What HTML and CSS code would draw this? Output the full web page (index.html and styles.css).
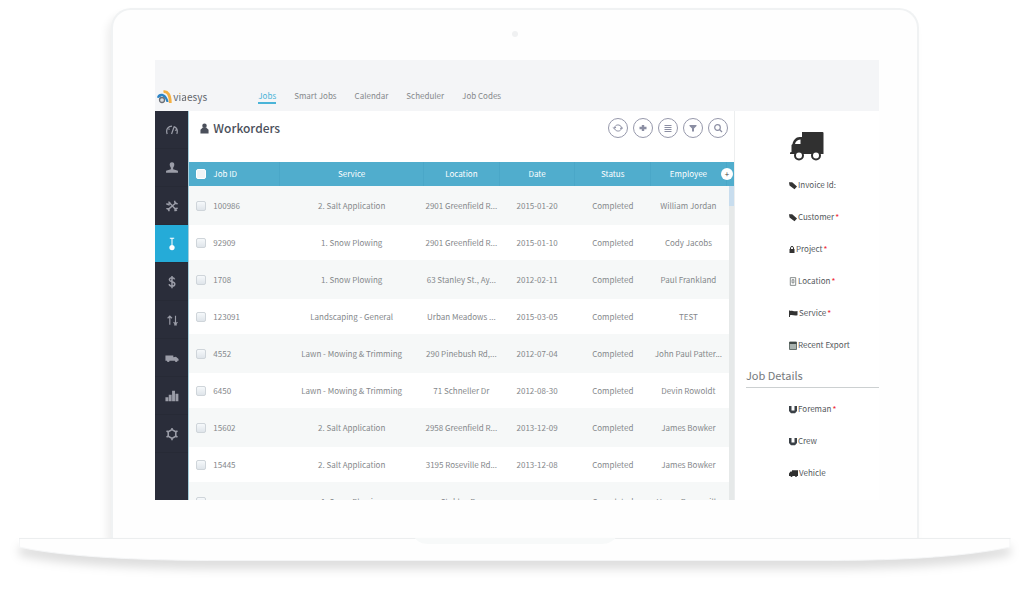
FILE: index.html
```html
<!DOCTYPE html>
<html lang="en">
<head>
<meta charset="utf-8">
<title>viaesys – Workorders</title>
<meta name="viewport" content="width=device-width, initial-scale=1">
<link rel="stylesheet" href="styles.css">
</head>
<body>
<div class="laptop">
  <div class="lid">
    <span class="camera"></span>
    <div class="screen">
      <header class="topbar">
        <a class="logo" href="#" aria-label="viaesys home">
          <svg class="logo-mark" viewBox="0 0 15 14" aria-hidden="true">
            <path d="M6.500 1.800C10.500 1 13.300 5 13.300 13" fill="none" stroke="#f5b042" stroke-width="2.800"/>
            <path d="M0 7.500C.5 2.500 9.500 1.500 11.500 12H9.500L8 8.500 5 6 1.500 8z" fill="#2b84c6"/>
            <circle cx="5" cy="10" r="2.500" fill="#d9dde0" stroke="#6b6f76" stroke-width="1.300"/>
          </svg>
          <span class="logo-text">v<i class="accent">ia</i>esys</span>
        </a>
        <nav class="tabs" aria-label="Main">
          <a class="tab tab-active" href="#">Jobs</a>
          <a class="tab" href="#">Smart Jobs</a>
          <a class="tab" href="#">Calendar</a>
          <a class="tab" href="#">Scheduler</a>
          <a class="tab" href="#">Job Codes</a>
        </nav>
      </header>
      <div class="workspace">
        <nav class="sidebar" aria-label="Sections">
          <a class="side-link" href="#" aria-label="Dashboard"><svg viewBox="0 0 16 16" fill="none" stroke="currentColor" stroke-width="1.400"><path d="M2.500 12.500C.5 7 4 3.500 8 3.500M10.500 4.200c3 1.300 4.200 4.500 3 8.300M7.500 12.500 10.500 4M4 6.500l1.200 1M11.500 8.500l2-1"/></svg></a>
          <a class="side-link" href="#" aria-label="Customers"><svg viewBox="0 0 16 16" fill="currentColor"><path d="M8 1.500c2 0 2.800 1.300 2.600 3.200C10.400 6.500 9.500 7 9.300 8v1.500l5.500 1.500v2.500H1.200V11l5.500-1.500V8C6.500 7 5.600 6.500 5.400 4.700 5.200 2.800 6 1.500 8 1.500z"/></svg></a>
          <a class="side-link" href="#" aria-label="Tools"><svg viewBox="0 0 16 16" fill="none" stroke="currentColor" stroke-width="1.700"><path d="M4 3l9.500 10.500M13 4 3 12.500M1.500 5.500l3 1 1-3M11 2l.5 3 3 .5M1.500 11h3v3M14.500 10.500l-3 .5v3"/></svg></a>
          <a class="side-link side-active" href="#" aria-label="Jobs"><svg viewBox="0 0 16 16" fill="none" stroke="currentColor" stroke-width="1.200"><path d="M5.500 1.500h5M8 1.500V10"/><circle cx="8" cy="12" r="3" fill="currentColor" stroke="none"/></svg></a>
          <a class="side-link" href="#" aria-label="Billing"><svg viewBox="0 0 16 16" fill="none" stroke="currentColor" stroke-width="1.700"><path d="M11 5C10.500 3.500 9.500 3.200 8 3.200 6.200 3.200 5 4 5 5.500 5 8.500 11.200 7 11.200 10.300c0 1.600-1.400 2.500-3.200 2.500-1.700 0-2.900-.6-3.300-2.300M8 1v14"/></svg></a>
          <a class="side-link" href="#" aria-label="Import and export"><svg viewBox="0 0 16 16" fill="none" stroke="currentColor" stroke-width="1.300"><path d="M5.500 13.500v-10M3 6l2.500-2.500L8 6M12 3v10M9.800 10.500 12 13l2.200-2.500M10.500 13.500h3"/></svg></a>
          <a class="side-link" href="#" aria-label="Fleet"><svg viewBox="0 0 16 16" fill="currentColor"><path d="M.5 5h9v2l3-.5 3 2.500v2h-1.200a1.500 1.500 0 0 1-3 0H5.200a1.500 1.500 0 0 1-3 0H.5z"/></svg></a>
          <a class="side-link" href="#" aria-label="Reports"><svg viewBox="0 0 16 16" fill="currentColor"><path d="M.5 9.500h3.300V14H.5zM4.300 6.500h3.300V14H4.300zM8.100 2h3.300v12H8.100zM12 5.500h3.300V14H12z"/></svg></a>
          <a class="side-link" href="#" aria-label="Settings"><svg viewBox="0 0 16 16" fill="none" stroke="currentColor" stroke-width="1.800"><path d="M8 3 12.300 5.500v5L8 13l-4.300-2.500v-5z"/><path d="M8 1v2M14.300 4.500l-2 1M14.300 11.500l-2-1M8 13v2M1.700 11.500l2-1M1.700 4.500l2 1"/></svg></a>
        </nav>
        <main class="main">
          <div class="titlebar">
            <h1 class="title">
              <svg class="title-icon" viewBox="0 0 10 12" fill="#4b505b" aria-hidden="true"><circle cx="5" cy="3" r="2.500"/><path d="M3.200 5h3.600L9.500 7.500V11.500H.5V7.500z"/></svg>
              Workorders
            </h1>
            <div class="actions">
              <button class="round" type="button" aria-label="Refresh"><svg viewBox="0 0 12 12" fill="none" stroke="currentColor"><path d="M2.500 6C3 2 8.500 2 9.500 5.500M9.500 6C9 10 4 9.800 2.700 7M.8 5.500l1.700 1.200L4 5M8 6.700l1.600-1.400L11 6.500"/></svg></button>
              <button class="round" type="button" aria-label="Add"><svg viewBox="0 0 12 12" fill="none" stroke="currentColor" stroke-width="2.400"><path d="M6 3v6M2.500 6h7"/></svg></button>
              <button class="round" type="button" aria-label="List"><svg viewBox="0 0 12 12" fill="none" stroke="currentColor"><path d="M2.500 3.500h7M2.500 5.500h7M2.500 7.500h7M2.500 9.500h7"/></svg></button>
              <button class="round" type="button" aria-label="Filter"><svg viewBox="0 0 12 12" fill="currentColor"><path d="M2.500 3h7v1L7 6.500V9.500H5V6.500L2.500 4z"/></svg></button>
              <button class="round" type="button" aria-label="Search"><svg viewBox="0 0 12 12" fill="none" stroke="currentColor" stroke-width="1.200"><circle cx="5.500" cy="5.500" r="2.800"/><path d="M7.500 7.500 10 10"/></svg></button>
            </div>
          </div>
          <div class="grid">
            <table class="jobs">
              <colgroup><col class="c-id"><col class="c-service"><col class="c-std"><col class="c-std"><col class="c-std"><col class="c-std"><col class="c-gutter"></colgroup>
              <thead>
                <tr><th class="id"><label class="pick"><input type="checkbox" class="box">Job ID</label></th><th>Service</th><th>Location</th><th>Date</th><th>Status</th><th>Employee</th><th class="gutter"></th></tr>
              </thead>
              <tbody>
                <tr><td class="id"><label class="pick"><input type="checkbox" class="box">100986</label></td><td>2. Salt Application</td><td>2901 Greenfield R...</td><td>2015-01-20</td><td>Completed</td><td>William Jordan</td><td></td></tr>
                <tr><td class="id"><label class="pick"><input type="checkbox" class="box">92909</label></td><td>1. Snow Plowing</td><td>2901 Greenfield R...</td><td>2015-01-10</td><td>Completed</td><td>Cody Jacobs</td><td></td></tr>
                <tr><td class="id"><label class="pick"><input type="checkbox" class="box">1708</label></td><td>1. Snow Plowing</td><td>63 Stanley St., Ay...</td><td>2012-02-11</td><td>Completed</td><td>Paul Frankland</td><td></td></tr>
                <tr><td class="id"><label class="pick"><input type="checkbox" class="box">123091</label></td><td>Landscaping - General</td><td>Urban Meadows ...</td><td>2015-03-05</td><td>Completed</td><td>TEST</td><td></td></tr>
                <tr><td class="id"><label class="pick"><input type="checkbox" class="box">4552</label></td><td>Lawn - Mowing &amp; Trimming</td><td>290 Pinebush Rd,...</td><td>2012-07-04</td><td>Completed</td><td>John Paul Patter...</td><td></td></tr>
                <tr><td class="id"><label class="pick"><input type="checkbox" class="box">6450</label></td><td>Lawn - Mowing &amp; Trimming</td><td>71 Schneller Dr</td><td>2012-08-30</td><td>Completed</td><td>Devin Rowoldt</td><td></td></tr>
                <tr><td class="id"><label class="pick"><input type="checkbox" class="box">15602</label></td><td>2. Salt Application</td><td>2958 Greenfield R...</td><td>2013-12-09</td><td>Completed</td><td>James Bowker</td><td></td></tr>
                <tr><td class="id"><label class="pick"><input type="checkbox" class="box">15445</label></td><td>2. Salt Application</td><td>3195 Roseville Rd...</td><td>2013-12-08</td><td>Completed</td><td>James Bowker</td><td></td></tr>
                <tr><td class="id"><label class="pick"><input type="checkbox" class="box" aria-label="Select job"></label></td><td>1. Snow Plowing</td><td>Stokley R...</td><td></td><td>Completed</td><td>Henry Bonnaville</td><td></td></tr>
              </tbody>
            </table>
            <button class="add-col" type="button" aria-label="Choose columns">+</button>
            <div class="track"><div class="thumb"></div></div>
          </div>
        </main>
        <aside class="details">
          <svg class="truck" viewBox="0 0 34 29" aria-hidden="true">
            <path d="M12 0h20.500q1 0 1 1v21H12z" fill="#303030"/>
            <path d="M12 5H9.500C6 5 3 8.500 2.500 12L1.500 13v7L0 20.500V22h13V5z" fill="#303030"/>
            <path d="M10.500 7.500v4.500H5c.6-2.500 2-4.300 5.500-4.500z" fill="#fff"/>
            <circle cx="9" cy="23.500" r="4" fill="#fff" stroke="#303030" stroke-width="2"/>
            <circle cx="26" cy="23.500" r="4" fill="#fff" stroke="#303030" stroke-width="2"/>
          </svg>
          <ul class="fields">
            <li class="field"><svg viewBox="0 0 8 8" fill="#333"><path d="M0 .8h3.200L8 5 5.500 7.800.5 4z"/></svg>Invoice Id:</li>
            <li class="field"><svg viewBox="0 0 8 8" fill="#333"><path d="M0 .8h3.200L8 5 5.500 7.800.5 4z"/></svg>Customer<b class="req">*</b></li>
            <li class="field"><svg class="slim" viewBox="0 0 6 8"><path d="M1.500 4V2.300C1.500.5 4.500.5 4.500 2.300V4" fill="none" stroke="#333"/><path d="M.5 3.500h5v4h-5z" fill="#333"/></svg>Project<b class="req">*</b></li>
            <li class="field"><svg viewBox="0 0 8 10" fill="none" stroke="#7c8282"><path d="M1 .7h6v8.600H1z"/><path d="M3 3h2v3.500H3z"/></svg>Location<b class="req">*</b></li>
            <li class="field"><svg class="wide" viewBox="0 0 9 8" fill="#333"><path d="M0 1h1v6.500H0zM1 1.500c2-1 3.500 1 7.500 0v4.200c-3 1-5-.8-7.500 0z"/></svg>Service<b class="req">*</b></li>
            <li class="field"><svg viewBox="0 0 8 9"><path d="M.5 1h7v7.500h-7z" fill="#a9b3af" stroke="#66716d"/><path d="M.5 1h7v2h-7z" fill="#3f4845"/></svg>Recent Export</li>
          </ul>
          <h2 class="section">Job Details</h2>
          <ul class="fields">
            <li class="field"><svg viewBox="0 0 8 8" fill="#3a4046"><path d="M0 .5h2.500V5h3V.5H8V5.500L6 7.800H2L0 5.500z"/></svg>Foreman<b class="req">*</b></li>
            <li class="field"><svg viewBox="0 0 8 8" fill="#3a4046"><path d="M0 .5h2.500V5h3V.5H8V5.500L6 7.800H2L0 5.500z"/></svg>Crew</li>
            <li class="field"><svg class="wide" viewBox="0 0 9 8" fill="#303030"><path d="M3 .8h6V6.500H8a1 1 0 0 1-2 0H3.500a1 1 0 0 1-2 0H0V4l1.500-2H3z"/></svg>Vehicle</li>
          </ul>
        </aside>
      </div>
    </div>
  </div>
  <svg class="base" viewBox="0 0 992 23" preserveAspectRatio="none" aria-hidden="true">
    <path d="M.5.5H991.500V9C940 20 870 22.500 800 22.500H190C110 22 40 18 .5 9z" fill="#fefefe" stroke="#f5f6f7"/>
    <path d="M0 .5H992" stroke="#eceeef"/>
    <path d="M396 0H597C592 5 588 6 580 6H412C404 6 400 5 396 0z" fill="#f7f9f9"/>
  </svg>
</div>
</body>
</html>
```

FILE: styles.css
```css
* {
  box-sizing: border-box;
}

body {
  margin: 0;
  background: #fff;
  color: #85888b;
  font-family: "Noto Sans CJK SC", "Noto Sans", sans-serif;
  font-size: 8px;
  line-height: 12px;
}

a {
  color: inherit;
  text-decoration: none;
}

button {
  padding: 0;
  font: inherit;
}

.laptop {
  display: flex;
  flex-direction: column;
  align-items: center;
  padding: 8px 0 30px 6px;
  overflow: hidden;
}

.lid {
  position: relative;
  width: 79.3%;
  padding: 50px 38px 38px 42px;
  border: 2px solid #f0f2f3;
  border-bottom: 0;
  border-radius: 20px 20px 0 0;
  background: #fefefe;
  box-shadow: -4px 6px 8px rgba(0, 0, 0, 0.07);
}

.camera {
  position: absolute;
  top: 21px;
  left: calc(50% - 3px);
  width: 6px;
  height: 6px;
  border-radius: 50%;
  background: #f0f1f2;
}

.base {
  position: relative;
  width: 97.4%;
  height: 23px;
  overflow: visible;
  filter: drop-shadow(0 8px 5px rgba(0, 0, 0, 0.13));
}

.screen {
  display: flex;
  flex-direction: column;
  aspect-ratio: 724 / 440;
  overflow: hidden;
  background: #fff;
}

.topbar {
  display: flex;
  flex-shrink: 0;
  align-items: flex-start;
  padding: 30px 0 7px 2px;
  background: #f4f5f7;
}

.logo {
  display: flex;
  align-items: center;
  gap: 1px;
  width: 14%;
  color: #63666c;
}

.logo-mark {
  width: 15px;
  height: 14px;
}

.logo-text {
  font-size: 10px;
  line-height: 14px;
}

.accent {
  font-style: normal;
  background: linear-gradient(#f5b042 5px, #63666c 5px);
  background-clip: text;
  color: transparent;
}

.tabs {
  display: flex;
  gap: 18px;
}

.tab {
  border-bottom: 2px solid transparent;
}

.tab-active {
  border-color: #4ab4d8;
  color: #4ab4d8;
}

.workspace {
  display: flex;
  flex: 1;
  min-height: 0;
}

.sidebar {
  flex: 0 0 34px;
  border-right: 1px solid #a5cfdd;
  background: #2a2d3a;
  color: #9b9da8;
}

.side-link {
  display: flex;
  align-items: center;
  justify-content: center;
  height: 38px;
  border-bottom: 1px solid #272a36;
}

.side-link svg {
  width: 14px;
  height: 14px;
}

.side-active {
  background: #25abd8;
  color: #fff;
}

.main {
  flex: 1;
  min-width: 0;
}

.titlebar {
  display: flex;
  align-items: center;
  justify-content: space-between;
  padding: 7px 6px 24px 11px;
}

.title {
  display: flex;
  align-items: center;
  gap: 4px;
  margin: 0;
  color: #4b505b;
  font-size: 12px;
  font-weight: 500;
  line-height: 18px;
}

.title-icon {
  width: 9px;
  height: 11px;
}

.actions {
  display: flex;
  gap: 5px;
}

.round {
  display: flex;
  align-items: center;
  justify-content: center;
  width: 20px;
  height: 20px;
  border: 1px solid #9698ab;
  border-radius: 50%;
  background: #fff;
  color: #8b8ea3;
}

.round svg {
  width: 12px;
  height: 12px;
}

.grid {
  position: relative;
}

.jobs {
  width: 100%;
  table-layout: fixed;
  border-collapse: collapse;
  text-align: center;
  white-space: nowrap;
}

.c-id {
  width: 16.6%;
}

.c-service {
  width: 26.4%;
}

.c-std {
  width: 13.9%;
}

.jobs th {
  height: 24px;
  padding: 0;
  border-right: 1px solid #4aa7c8;
  background: #50adcd;
  color: #fff;
  font-weight: 400;
}

.jobs .gutter {
  border: 0;
}

.jobs td {
  height: 35px;
  padding: 0;
}

.jobs tbody tr:nth-child(odd) {
  background: #f6f8f8;
}

.jobs tbody tr:nth-child(odd) td {
  height: 39px;
}

.jobs .id {
  text-align: left;
}

.pick {
  display: flex;
  align-items: center;
  gap: 7px;
  padding-left: 7px;
}

.box {
  width: 10px;
  height: 10px;
  margin: 0;
  appearance: none;
  border: 1px solid #cfd5da;
  border-radius: 2px;
  background: linear-gradient(#f6f9fb, #dfe5ea);
}

th .box {
  border-color: #fff;
  background: #f1f4f6;
}

.add-col {
  position: absolute;
  top: 6px;
  right: 1px;
  width: 12px;
  height: 12px;
  border: 0;
  border-radius: 50%;
  background: #fff;
  color: #444;
  line-height: 10px;
}

.track {
  position: absolute;
  top: 24px;
  right: 0;
  bottom: 0;
  width: 5px;
  background: #e6e9e9;
}

.thumb {
  height: 20px;
  background: #c8ddee;
}

.details {
  flex: 0 0 20%;
  padding-left: 11px;
  border-left: 1px solid #eceeef;
}

.truck {
  display: block;
  width: 34px;
  height: 29px;
  margin: 21px 0 8px 44px;
}

.fields {
  margin: 0;
  padding: 0 0 0 43px;
  list-style: none;
}

.field {
  display: flex;
  align-items: center;
  gap: 1px;
  height: 32px;
  color: #54585c;
}

.field svg {
  width: 8px;
  height: 9px;
}

.field .slim {
  width: 6px;
}

.field .wide {
  width: 9px;
}

.req {
  color: #f0303c;
  font-weight: 500;
}

.section {
  margin: 5px 0;
  padding-bottom: 3px;
  border-bottom: 1px solid #ccd0d1;
  color: #75797d;
  font-size: 11px;
  font-weight: 400;
  line-height: 18px;
}
```
